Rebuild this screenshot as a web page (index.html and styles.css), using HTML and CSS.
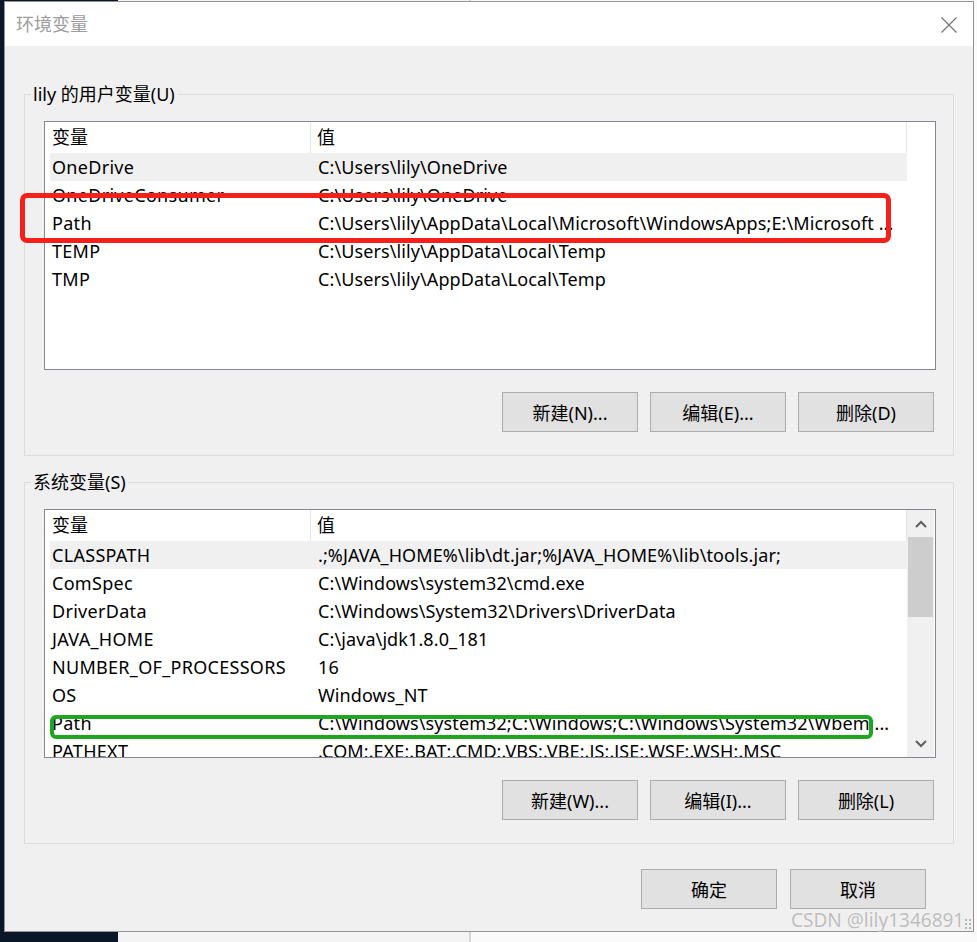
FILE: index.html
```html
<!DOCTYPE html>
<html lang="zh-CN">
<head>
    <meta charset="UTF-8">
    <title>环境变量</title>
    <link rel="stylesheet" href="styles.css">
</head>
<body>
    <div class="desktop">
        <div class="dialog">
            <div class="titlebar">
                <span class="title">环境变量</span>
                <svg class="close" width="16" height="16" viewBox="0 0 16 16">
                    <path d="M0.5 0.5 L15.5 15.5 M15.5 0.5 L0.5 15.5" stroke="#707070" stroke-width="1.1" fill="none"/>
                </svg>
            </div>

            <div class="dialog-body">
                <!-- 用户变量 -->
                <div class="group">
                    <span class="legend">lily 的用户变量(U)</span>
                    <div class="listbox">
                        <div class="list-main">
                            <div class="list-head">
                                <div class="head-name">变量</div>
                                <div class="head-value">值</div>
                            </div>
                            <div class="row selected"><div class="cell-name">OneDrive</div><div class="cell-value">C:\Users\lily\OneDrive</div></div>
                            <div class="row"><div class="cell-name">OneDriveConsumer</div><div class="cell-value">C:\Users\lily\OneDrive</div></div>
                            <div class="row"><div class="cell-name">Path</div><div class="cell-value">C:\Users\lily\AppData\Local\Microsoft\WindowsApps;E:\Microsoft ...</div></div>
                            <div class="row"><div class="cell-name">TEMP</div><div class="cell-value">C:\Users\lily\AppData\Local\Temp</div></div>
                            <div class="row"><div class="cell-name">TMP</div><div class="cell-value">C:\Users\lily\AppData\Local\Temp</div></div>
                        </div>
                    </div>
                    <div class="btn-row">
                        <button class="btn">新建(N)...</button>
                        <button class="btn">编辑(E)...</button>
                        <button class="btn">删除(D)</button>
                    </div>
                </div>

                <!-- 系统变量 -->
                <div class="group group-system">
                    <span class="legend">系统变量(S)</span>
                    <div class="listbox">
                        <div class="list-main">
                            <div class="list-head">
                                <div class="head-name">变量</div>
                                <div class="head-value">值</div>
                            </div>
                            <div class="row selected"><div class="cell-name">CLASSPATH</div><div class="cell-value">.;%JAVA_HOME%\lib\dt.jar;%JAVA_HOME%\lib\tools.jar;</div></div>
                            <div class="row"><div class="cell-name">ComSpec</div><div class="cell-value">C:\Windows\system32\cmd.exe</div></div>
                            <div class="row"><div class="cell-name">DriverData</div><div class="cell-value">C:\Windows\System32\Drivers\DriverData</div></div>
                            <div class="row"><div class="cell-name">JAVA_HOME</div><div class="cell-value">C:\java\jdk1.8.0_181</div></div>
                            <div class="row"><div class="cell-name">NUMBER_OF_PROCESSORS</div><div class="cell-value">16</div></div>
                            <div class="row"><div class="cell-name">OS</div><div class="cell-value">Windows_NT</div></div>
                            <div class="row"><div class="cell-name">Path</div><div class="cell-value">C:\Windows\system32;C:\Windows;C:\Windows\System32\Wbem;...</div></div>
                            <div class="row"><div class="cell-name">PATHEXT</div><div class="cell-value">.COM;.EXE;.BAT;.CMD;.VBS;.VBE;.JS;.JSE;.WSF;.WSH;.MSC</div></div>
                        </div>
                        <div class="scrollbar">
                            <div class="arrow">
                                <svg width="12" height="8" viewBox="0 0 12 8"><polyline points="1,7 6,2 11,7" fill="none" stroke="#606060" stroke-width="2"/></svg>
                            </div>
                            <div class="thumb"></div>
                            <div class="track"></div>
                            <div class="arrow">
                                <svg width="12" height="8" viewBox="0 0 12 8"><polyline points="1,1 6,6 11,1" fill="none" stroke="#606060" stroke-width="2"/></svg>
                            </div>
                        </div>
                    </div>
                    <div class="btn-row">
                        <button class="btn">新建(W)...</button>
                        <button class="btn">编辑(I)...</button>
                        <button class="btn">删除(L)</button>
                    </div>
                </div>

                <div class="footer">
                    <button class="btn">确定</button>
                    <button class="btn">取消</button>
                </div>
            </div>

            <!-- 标注 -->
            <div class="mark mark-red"></div>
            <div class="mark mark-green"></div>
            <div class="watermark">CSDN @lily1346891</div>
            <div class="grip"></div>
        </div>
    </div>
</body>
</html>
```

FILE: styles.css
```css
body {
    margin: 0;
    font-family: "Noto Sans", "Noto Sans CJK SC", sans-serif;
    font-size: 18px;
    color: #000;
}

.desktop {
    height: 942px;
    overflow: hidden;
    background: linear-gradient(to right, #0b1727 0, #0b1727 118px, #f4f4f4 118px, #f4f4f4 469px, #d6d6d6 469px, #d6d6d6 471px, #fafafa 471px);
}

.dialog {
    position: relative;
    width: 970px;
    height: 931px;
    margin: 1px 0 0 4px;
    box-sizing: border-box;
    border: 1px solid #949494;
    background: #f0f0f0;
}

.titlebar {
    height: 44px;
    background: #fff;
    display: flex;
    align-items: center;
    justify-content: space-between;
    padding: 0 16px 0 11px;
}

.title {
    color: #9c9c9c;
    line-height: 24px;
    margin-top: -1px;
}

.close {
    display: block;
    margin-top: 1px;
}

.dialog-body {
    padding: 48px 19px 0 19px;
}

.group {
    position: relative;
    border: 1px solid #dcdcdc;
    padding: 26px 17px 23px 19px;
}

.group-system {
    margin-top: 26px;
}

.legend {
    position: absolute;
    top: -13px;
    left: 6px;
    padding: 0 2px;
    line-height: 24px;
    background: #f0f0f0;
    white-space: nowrap;
}

.listbox {
    display: flex;
    height: 249px;
    box-sizing: border-box;
    border: 1px solid #828790;
    background: #fff;
    overflow: hidden;
}

.list-main {
    flex: 1;
    min-width: 0;
}

.list-head {
    display: flex;
    height: 31px;
    line-height: 30px;
}

.head-name {
    width: 266px;
    padding-left: 7px;
    box-sizing: border-box;
    border-right: 1px solid #e5e5e5;
}

.head-value {
    width: 596px;
    padding-left: 6px;
    box-sizing: border-box;
    border-right: 1px solid #e5e5e5;
}

.row {
    display: flex;
    width: 857px;
    height: 28px;
    line-height: 28px;
    margin-left: 5px;
    white-space: nowrap;
}

.row.selected {
    background: #f0f0f0;
}

.cell-name {
    width: 261px;
    padding-left: 2px;
    box-sizing: border-box;
    flex-shrink: 0;
    letter-spacing: 0.3px;
}

.cell-value {
    flex: 1;
    padding-left: 7px;
    overflow: hidden;
    letter-spacing: 0.1px;
}

.scrollbar {
    width: 27px;
    margin-right: 1px;
    background: #f0f0f0;
    display: flex;
    flex-direction: column;
}

.arrow {
    height: 27px;
    display: flex;
    align-items: center;
    justify-content: center;
}

.arrow svg {
    display: block;
}

.thumb {
    height: 80px;
    margin: 0 1px;
    background: #cdcdcd;
}

.track {
    flex: 1;
}

.btn-row {
    display: flex;
    justify-content: flex-end;
    gap: 12px;
    margin-top: 22px;
    padding-right: 2px;
}

.btn {
    width: 136px;
    height: 40px;
    box-sizing: border-box;
    border: 1px solid #adadad;
    background: #e1e1e1;
    font-family: "Noto Sans", "Noto Sans CJK SC", sans-serif;
    font-size: 18px;
    color: #000;
    padding: 0;
}

.footer {
    display: flex;
    justify-content: flex-end;
    gap: 13px;
    margin-top: 25px;
    padding-right: 28px;
}

/* 截图上的标注框 */
.mark {
    position: absolute;
    box-sizing: border-box;
}

.mark-red {
    left: 15px;
    top: 191px;
    width: 871px;
    height: 50px;
    border: 5px solid #f5201a;
    border-radius: 7px;
}

.mark-green {
    left: 45px;
    top: 713px;
    width: 823px;
    height: 24px;
    border: 4px solid #1fa51f;
    border-radius: 6px;
}

.watermark {
    position: absolute;
    left: 786px;
    top: 905px;
    font-size: 19px;
    line-height: 26px;
    color: #bdbdbd;
    text-shadow: 0 0 1px #fff;
    white-space: nowrap;
}

.grip {
    position: absolute;
    right: 1px;
    bottom: 2px;
    width: 8px;
    height: 11px;
    background: radial-gradient(circle, #b5b5b5 1px, transparent 1.2px) 0 0 / 4px 4px;
}
```
